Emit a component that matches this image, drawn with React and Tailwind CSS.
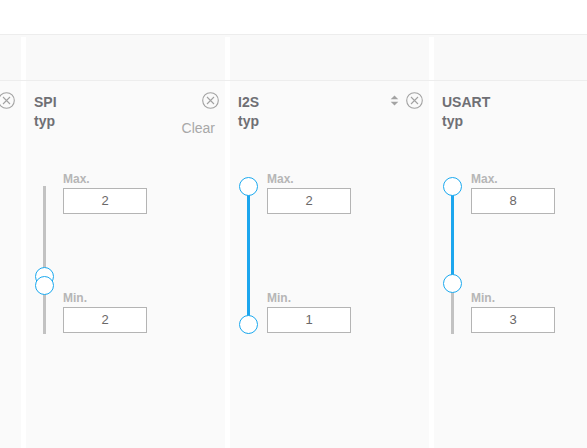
import React from "react";

const cols = [
  { id: "c0", title: "", sort: false, clear: false, max: "", min: "", hTop: 5, hBot: 143, blue: true, partial: true },
  { id: "c1", title: "SPI", sort: false, clear: true, max: "2", min: "2", hTop: 95, hBot: 104, blue: false },
  { id: "c2", title: "I2S", sort: true, clear: false, max: "2", min: "1", hTop: 5, hBot: 143, blue: true },
  { id: "c3", title: "USART", sort: false, clear: false, max: "8", min: "3", hTop: 4.5, hBot: 102, blue: true },
];

function CloseIcon() {
  return (
    <svg width="17" height="17" viewBox="0 0 17 17" className="block">
      <circle cx="8.5" cy="8.5" r="7.8" fill="none" stroke="#a2a2a2" strokeWidth="1.1" />
      <path d="M5 5 L12 12 M12 5 L5 12" stroke="#a2a2a2" strokeWidth="1.1" />
    </svg>
  );
}

function SortIcon() {
  return (
    <svg width="9" height="11" viewBox="0 0 9 11" className="block">
      <path d="M4.5 0.5 L8.3 4.3 L0.7 4.3 Z" fill="#a3a3a3" />
      <path d="M4.5 10.5 L8.3 6.7 L0.7 6.7 Z" fill="#a3a3a3" />
    </svg>
  );
}

function Handle({ top }) {
  return (
    <div
      className="absolute left-[1px] w-[19px] h-[19px] rounded-full bg-white border border-[#1ba9ef]"
      style={{ top: `${top}px` }}
    />
  );
}

function Column({ c }) {
  const blueTop = c.hTop + 9.5;
  const blueH = c.hBot - c.hTop;
  return (
    <div className="w-[199px] shrink-0 bg-[#fafafa] pt-[12px]">
      <div className="flex justify-between h-[40px] pl-[8px] pr-[6px]">
        <div className="text-[14px] leading-[19px] font-bold text-[#6f6f74]">
          {!c.partial && (
            <>
              <div>{c.title}</div>
              <div>typ</div>
            </>
          )}
        </div>
        <div className="flex flex-col items-end -mt-[1px]">
          <div className="flex items-center gap-[7px]">
            {c.sort && <SortIcon />}
            <CloseIcon />
          </div>
          {c.clear && (
            <div className="mt-[11px] mr-[4px] text-[14px] leading-[16px] text-[#a8a8a8]">Clear</div>
          )}
        </div>
      </div>
      {!c.partial && (
        <div className="flex mt-[39px] pl-[8px]">
          <div className="relative w-[29px] h-[162px]">
            <div className="absolute left-[9px] top-[14px] w-[3px] h-[148px] bg-[#c2c2c2]" />
            {c.blue && (
              <div
                className="absolute left-[9px] w-[3px] bg-[#1ca6ee]"
                style={{ top: `${blueTop}px`, height: `${blueH}px` }}
              />
            )}
            <Handle top={c.hTop} />
            <Handle top={c.hBot} />
          </div>
          <div className="w-[84px]">
            <div className="text-[12px] leading-[14px] font-bold text-[#b6b6b6]">Max.</div>
            <div className="mt-[2px] h-[26px] border border-[#b4b4b4] bg-white text-center text-[13px] leading-[24px] text-[#6a6868]">
              {c.max}
            </div>
            <div className="mt-[77px] text-[12px] leading-[14px] font-bold text-[#b6b6b6]">Min.</div>
            <div className="mt-[2px] h-[26px] border border-[#b4b4b4] bg-white text-center text-[13px] leading-[24px] text-[#6a6868]">
              {c.min}
            </div>
          </div>
        </div>
      )}
    </div>
  );
}

export default function App() {
  return (
    <div className="w-[587px] h-[448px] overflow-hidden bg-white font-['Liberation_Sans',Arial,sans-serif]">
      <div className="h-[34px]" />
      <div className="border-t border-[#ededed]">
        <div className="h-[2px] bg-[#f9f9f9]" />
        <div className="flex gap-[5px] -ml-[178px]">
          {cols.map((c) => (
            <div key={c.id} className="w-[199px] shrink-0 h-[43px] bg-[#f9f9f9]" />
          ))}
        </div>
        <div className="h-px bg-[#ededed]" />
        <div className="flex gap-[5px] -ml-[178px] h-[367px]">
          {cols.map((c) => (
            <Column key={c.id} c={c} />
          ))}
        </div>
      </div>
    </div>
  );
}
